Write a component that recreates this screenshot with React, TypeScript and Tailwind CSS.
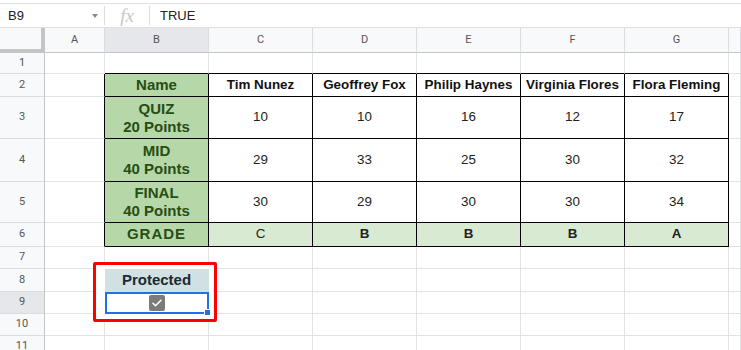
import React from 'react';

const COLS = ['A', 'B', 'C', 'D', 'E', 'F', 'G', ''];
const ROW_H = ['h-[21px]', 'h-[23px]', 'h-[42px]', 'h-[43px]', 'h-[41px]', 'h-[24px]', 'h-[22px]', 'h-[23px]', 'h-[22px]', 'h-[22px]', 'h-[22px]'];

const names = ['Tim Nunez', 'Geoffrey Fox', 'Philip Haynes', 'Virginia Flores', 'Flora Fleming'];
const scores: Record<number, { label: [string, string]; values: number[] }> = {
  3: { label: ['QUIZ', '20 Points'], values: [10, 10, 16, 12, 17] },
  4: { label: ['MID', '40 Points'], values: [29, 33, 25, 30, 32] },
  5: { label: ['FINAL', '40 Points'], values: [30, 29, 30, 30, 34] },
};
const grades = ['C', 'B', 'B', 'B', 'A'];

function Checkbox() {
  return (
    <span className="flex h-[16px] w-[16px] items-center justify-center rounded-[2px] bg-[#7b7b7b]">
      <svg width="12" height="12" viewBox="0 0 24 24" fill="none">
        <path d="M4 12.5l5 5L20 6.5" stroke="white" strokeWidth="3.2" strokeLinecap="round" strokeLinejoin="round" />
      </svg>
    </span>
  );
}

function cellContent(row: number, col: number) {
  // col: 0 = A, 1 = B, ... 6 = G, 7 = H
  if (row === 2) {
    if (col === 1) return <span className="text-[15px] font-bold text-[#274e13]">Name</span>;
    if (col >= 2 && col <= 6) return <span className="font-bold text-[#111]">{names[col - 2]}</span>;
  }
  if (scores[row]) {
    const s = scores[row];
    if (col === 1)
      return (
        <span className="text-center text-[15px] font-bold leading-[18px] text-[#274e13]">
          {s.label[0]}
          <br />
          {s.label[1]}
        </span>
      );
    if (col >= 2 && col <= 6) return <span className="text-[#222]">{s.values[col - 2]}</span>;
  }
  if (row === 6) {
    if (col === 1) return <span className="text-[15px] font-bold tracking-[1px] text-[#274e13]">GRADE</span>;
    if (col >= 2 && col <= 6) {
      const g = grades[col - 2];
      return <span className={g === 'C' ? 'text-[#222]' : 'font-bold text-[#222]'}>{g}</span>;
    }
  }
  if (row === 8 && col === 1) return <span className="text-[15px] font-bold text-[#1b2a33]">Protected</span>;
  return null;
}

function cellClass(row: number, col: number) {
  const inTable = row >= 2 && row <= 6 && col >= 1 && col <= 6;
  let right = 'border-r-[#e2e3e3]';
  let bottom = 'border-b-[#e2e3e3]';
  let bg = 'bg-white';
  if (inTable) {
    right = 'border-r-black';
    bottom = 'border-b-black';
    if (col === 1) bg = 'bg-[#b6d7a8]';
    else if (row === 6) bg = 'bg-[#d9ead3]';
  }
  if (row === 1 && col >= 1 && col <= 6) bottom = 'border-b-black';
  if (col === 0 && row >= 2 && row <= 6) right = 'border-r-black';
  if (row === 8 && col === 1) {
    bg = 'bg-[#d0e0e3]';
    right = 'border-r-[#d0e0e3]';
    bottom = 'border-b-[#d0e0e3]';
  }
  const lift = row === 8 && col === 1 ? 'relative z-20' : '';
  return `flex items-center justify-center border-r border-b ${right} ${bottom} ${bg} ${lift}`;
}

export default function App() {
  const rows = Array.from({ length: 11 }, (_, i) => i + 1);
  return (
    <div className="h-[350px] w-[741px] overflow-hidden bg-white font-['Liberation_Sans',Arial,sans-serif] text-[13.4px]">
      {/* formula bar */}
      <div className="pt-[3px]">
        <div className="flex h-[25px] items-center border-t border-b border-[#e0e0e0] text-[13px] text-[#222]">
          <div className="flex w-[105px] items-center justify-between border-r border-[#dadce0] pl-[8px] pr-[6px]">
            <span>B9</span>
            <svg width="6" height="4" viewBox="0 0 6 4">
              <path d="M0 0h6L3 4z" fill="#8a8a8a" />
            </svg>
          </div>
          <div className="flex w-[45px] items-center justify-center border-r border-[#dadce0] font-['Liberation_Serif',serif] text-[19px] italic leading-none text-[#c7c7c7]">
            fx
          </div>
          <div className="pl-[10px]">TRUE</div>
        </div>
      </div>

      {/* grid */}
      <div className="relative">
        <div className="grid grid-cols-[45px_60px_104px_104px_104px_104px_104px_104px_1fr]">
          {/* header row */}
          <div className="h-[25px] border-r-[4px] border-b-[4px] border-[#c4c4c4] bg-[#f8f9fa]" />
          {COLS.map((c, i) => (
            <div
              key={c + i}
              className={`flex h-[25px] items-center justify-center border-r border-b border-r-[#dadce0] border-b-[#c4c4c4] font-['Roboto',sans-serif] text-[11px] text-[#555] ${
                c === 'B' ? 'bg-[#e5e7ea]' : 'bg-[#f8f9fa]'
              }`}
            >
              {c}
            </div>
          ))}

          {rows.map((r) => (
            <React.Fragment key={r}>
              <div
                className={`flex ${ROW_H[r - 1]} items-center justify-center border-r border-b border-r-[#c4c4c4] border-b-[#dadce0] font-['Roboto',sans-serif] text-[11px] text-[#555] ${
                  r === 9 ? 'bg-[#e5e7ea]' : 'bg-[#f8f9fa]'
                }`}
              >
                {r}
              </div>
              {COLS.map((_, ci) =>
                r === 9 && ci === 1 ? (
                  <div key={ci} className={`relative z-20 flex ${ROW_H[r - 1]} items-center justify-center border-2 border-[#1a73e8] bg-white`}>
                    <Checkbox />
                    <span className="absolute -right-[4px] -bottom-[4px] h-[7px] w-[7px] border border-white bg-[#1a73e8]" />
                  </div>
                ) : (
                  <div key={ci} className={`${ROW_H[r - 1]} ${cellClass(r, ci)}`}>
                    {cellContent(r, ci)}
                  </div>
                )
              )}
            </React.Fragment>
          ))}
        </div>

        {/* red annotation box */}
        <div className="absolute top-[234px] left-[93px] z-10 h-[60px] w-[124px] rounded-[2px] border-[3px] border-[#ff0000] bg-white" />
      </div>
    </div>
  );
}
